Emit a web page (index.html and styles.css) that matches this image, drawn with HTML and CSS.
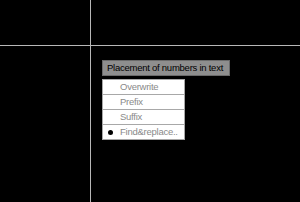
FILE: index.html
```html
<!DOCTYPE html>
<html>
<head>
    <meta charset="utf-8">
    <title>Placement of numbers</title>
    <link rel="stylesheet" href="styles.css">
</head>
<body>
    <div class="canvas">
        <div class="cell"></div>
        <div class="vline"></div>
        <div class="cell"></div>
        <div class="hline"></div>
        <div class="hline cross"></div>
        <div class="hline"></div>
        <div class="cell"></div>
        <div class="vline"></div>
        <div class="cell"></div>
    </div>
    <div class="popup">
        <div class="title">Placement of numbers in text</div>
        <ul class="menu">
            <li>Overwrite</li>
            <li>Prefix</li>
            <li>Suffix</li>
            <li class="checked">Find&amp;replace..</li>
        </ul>
    </div>
</body>
</html>
```
FILE: styles.css
```css
* {
    margin: 0;
    padding: 0;
    box-sizing: border-box;
}

body {
    background-color: #000;
    width: 300px;
    height: 202px;
    overflow: hidden;
    font-family: "Liberation Sans", Arial, sans-serif;
    font-size: 9.5px;
    letter-spacing: -0.25px;
}

.canvas {
    display: grid;
    grid-template-columns: 90px 1px 1fr;
    grid-template-rows: 45px 1px 1fr;
    width: 300px;
    height: 202px;
}

.vline,
.hline {
    background-color: #b8b8b8;
}

.popup {
    position: absolute;
    left: 102px;
    top: 60px;
}

.title {
    width: 128px;
    height: 16px;
    line-height: 14px;
    padding-left: 4px;
    background-color: #8e8e8e;
    border: 1px solid #6a6a6a;
    color: #000;
    white-space: nowrap;
}

.menu {
    list-style-type: none;
    margin-top: 3px;
    width: 83px;
    background-color: #fff;
    border: 1px solid #a8a8a8;
}

.menu>li {
    height: 15px;
    line-height: 14px;
    padding-left: 17px;
    color: #8a8a8a;
    border-top: 1px solid #a8a8a8;
    position: relative;
    white-space: nowrap;
}

.menu>li:first-child {
    height: 14px;
    border-top: none;
}

.checked::before {
    content: "";
    position: absolute;
    left: 5px;
    top: 5px;
    width: 5px;
    height: 5px;
    border-radius: 50%;
    background-color: #000;
}
```
